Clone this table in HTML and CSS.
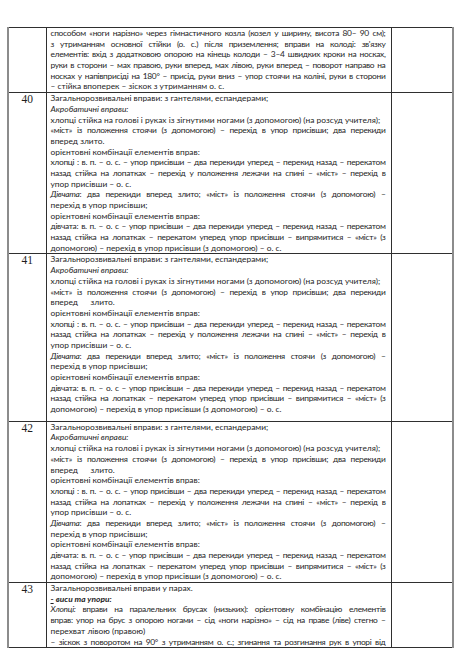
FILE: index.html
```html
<!DOCTYPE html>
<html lang="uk">
<head>
<meta charset="utf-8">
<title>План</title>
<link rel="stylesheet" href="styles.css">
</head>
<body>
<table class="plan">
<colgroup><col class="c-num"><col class="c-body"><col class="c-note"></colgroup>
<tr>
<td class="num"></td>
<td class="body">
<span class="ln j">способом «ноги нарізно» через гімнастичного козла (козел у ширину, висота 80– 90 см);</span>
<span class="ln j">з утриманням основної стійки (о. с.) після приземлення; вправи на колоді: зв'язку</span>
<span class="ln j">елементів: вхід з додатковою опорою на кінець колоди – 3–4 швидких кроки на носках,</span>
<span class="ln j">руки в сторони – мах правою, руки вперед, мах лівою, руки вперед – поворот направо на</span>
<span class="ln j">носках у напівприсіді на 180° – присід, руки вниз – упор стоячи на коліні, руки в сторони</span>
<span class="ln">– стійка впоперек – зіскок з утриманням о. с.</span>
</td>
<td class="note"></td>
</tr>
<tr>
<td class="num">40</td>
<td class="body">
<span class="ln">Загальнорозвивальні вправи: з гантелями, еспандерами;</span>
<span class="ln"><i>Акробатичні вправи:</i></span>
<span class="ln">хлопці стійка на голові і руках із зігнутими ногами (з допомогою) (на розсуд учителя);</span>
<span class="ln j">«міст» із положення стоячи (з допомогою) – перехід в упор присівши; два перекиди</span>
<span class="ln">вперед злито.</span>
<span class="ln">орієнтовні комбінації елементів вправ:</span>
<span class="ln j">хлопці : в. п. – о. с. – упор присівши – два перекиди уперед – перекид назад – перекатом</span>
<span class="ln j">назад стійка на лопатках – перехід у положення лежачи на спині – «міст» – перехід в</span>
<span class="ln">упор присівши – о. с.</span>
<span class="ln j"><i>Дівчата</i>: два перекиди вперед злито; «міст» із положення стоячи (з допомогою) –</span>
<span class="ln">перехід в упор присівши;</span>
<span class="ln">орієнтовні комбінації елементів вправ:</span>
<span class="ln j">дівчата: в. п. – о. с – упор присівши – два перекиди уперед – перекид назад – перекатом</span>
<span class="ln j">назад стійка на лопатках – перекатом уперед упор присівши – випрямитися – «міст» (з</span>
<span class="ln">допомогою) – перехід в упор присівши (з допомогою) – о. с.</span>
</td>
<td class="note"></td>
</tr>
<tr>
<td class="num">41</td>
<td class="body tall">
<span class="ln">Загальнорозвивальні вправи: з гантелями, еспандерами;</span>
<span class="ln"><i>Акробатичні вправи:</i></span>
<span class="ln">хлопці стійка на голові і руках із зігнутими ногами (з допомогою) (на розсуд учителя);</span>
<span class="ln j">«міст» із положення стоячи (з допомогою) – перехід в упор присівши; два перекиди</span>
<span class="ln"><span class="tab">вперед</span>злито.</span>
<span class="ln">орієнтовні комбінації елементів вправ:</span>
<span class="ln j">хлопці : в. п. – о. с. – упор присівши – два перекиди уперед – перекид назад – перекатом</span>
<span class="ln j">назад стійка на лопатках – перехід у положення лежачи на спині – «міст» – перехід в</span>
<span class="ln">упор присівши – о. с.</span>
<span class="ln j"><i>Дівчата</i>: два перекиди вперед злито; «міст» із положення стоячи (з допомогою) –</span>
<span class="ln">перехід в упор присівши;</span>
<span class="ln">орієнтовні комбінації елементів вправ:</span>
<span class="ln j">дівчата: в. п. – о. с – упор присівши – два перекиди уперед – перекид назад – перекатом</span>
<span class="ln j">назад стійка на лопатках – перекатом уперед упор присівши – випрямитися – «міст» (з</span>
<span class="ln">допомогою) – перехід в упор присівши (з допомогою) – о. с.</span>
</td>
<td class="note"></td>
</tr>
<tr>
<td class="num">42</td>
<td class="body">
<span class="ln">Загальнорозвивальні вправи: з гантелями, еспандерами;</span>
<span class="ln"><i>Акробатичні вправи:</i></span>
<span class="ln">хлопці стійка на голові і руках із зігнутими ногами (з допомогою) (на розсуд учителя);</span>
<span class="ln j">«міст» із положення стоячи (з допомогою) – перехід в упор присівши; два перекиди</span>
<span class="ln"><span class="tab">вперед</span>злито.</span>
<span class="ln">орієнтовні комбінації елементів вправ:</span>
<span class="ln j">хлопці : в. п. – о. с. – упор присівши – два перекиди уперед – перекид назад – перекатом</span>
<span class="ln j">назад стійка на лопатках – перехід у положення лежачи на спині – «міст» – перехід в</span>
<span class="ln">упор присівши – о. с.</span>
<span class="ln j"><i>Дівчата</i>: два перекиди вперед злито; «міст» із положення стоячи (з допомогою) –</span>
<span class="ln">перехід в упор присівши;</span>
<span class="ln">орієнтовні комбінації елементів вправ:</span>
<span class="ln j">дівчата: в. п. – о. с – упор присівши – два перекиди уперед – перекид назад – перекатом</span>
<span class="ln j">назад стійка на лопатках – перекатом уперед упор присівши – випрямитися – «міст» (з</span>
<span class="ln">допомогою) – перехід в упор присівши (з допомогою) – о. с.</span>
</td>
<td class="note"></td>
</tr>
<tr>
<td class="num">43</td>
<td class="body">
<span class="ln">Загальнорозвивальні вправи у парах.</span>
<span class="ln"><b class="u">-</b> <b><i>виси та упори:</i></b></span>
<span class="ln j"><i>Хлопці:</i> вправи на паралельних брусах (низьких): орієнтовну комбінацію елементів</span>
<span class="ln j">вправ: упор на брус з опорою ногами – сід «ноги нарізно» – сід на праве (ліве) стегно –</span>
<span class="ln">перехват лівою (правою)</span>
<span class="ln j">– зіскок з поворотом на 90° з утриманням о. с.; згинання та розгинання рук в упорі від</span>
</td>
<td class="note"></td>
</tr>
</table>
</body>
</html>
```

FILE: styles.css
```css
html, body {
  margin: 0;
  padding: 0;
  background: #ffffff;
}

body {
  font-family: "Lato", "Open Sans", sans-serif;
  color: #1e1e1e;
}

.plan {
  border-collapse: collapse;
  table-layout: fixed;
  width: 445px;
  margin: 27px 0 0 7px;
  border-left: 2px solid #8c8c8c;
  border-right: 2px solid #8c8c8c;
}

.c-num { width: 38px; }
.c-body { width: 345px; }
.c-note { width: 62px; }

.plan td {
  border: 1px solid #2f2f2f;
  vertical-align: top;
  padding: 0;
}

.num {
  font-family: "Liberation Serif", "DejaVu Serif", serif;
  font-size: 11.5px;
  line-height: 12px;
  text-align: center;
}

.plan td.body {
  font-size: 8.4px;
  line-height: 10.7px;
  padding: 0 5px 0 4px;
}

.plan td.body.tall {
  padding-bottom: 6px;
}

.ln {
  display: block;
  height: 10.7px;
  white-space: nowrap;
  text-align: left;
}

.ln.j {
  white-space: normal;
  text-align: justify;
  text-align-last: justify;
  letter-spacing: -0.3px;
}

.tab {
  display: inline-block;
  width: 40px;
}

.u {
  text-decoration: underline;
}
```
